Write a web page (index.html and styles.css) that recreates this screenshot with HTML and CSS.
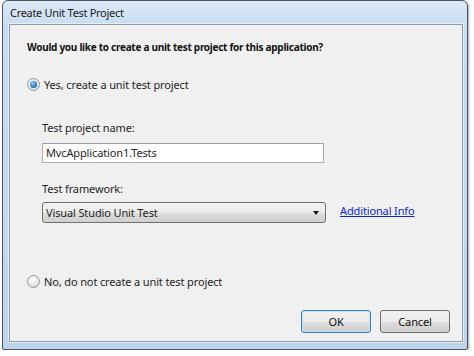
FILE: index.html
```html
<!DOCTYPE html>
<html>
<head>
<meta charset="utf-8">
<link rel="stylesheet" href="styles.css">
</head>
<body>
<div class="window">
  <div class="titlebar">Create Unit Test Project</div>
  <div class="client">
    <div class="question">Would you like to create a unit test project for this application?</div>
    <div class="radio-row yes-row">
      <span class="radio checked"></span>
      <span>Yes, create a unit test project</span>
    </div>
    <div class="options">
      <div class="label">Test project name:</div>
      <div class="textbox">MvcApplication1.Tests</div>
      <div class="label fw-label">Test framework:</div>
      <div class="fw-row">
        <div class="select">
          <span>Visual Studio Unit Test</span>
          <span class="arrow"></span>
        </div>
        <a class="link" href="#">Additional Info</a>
      </div>
    </div>
    <div class="radio-row no-row">
      <span class="radio"></span>
      <span>No, do not create a unit test project</span>
    </div>
    <div class="buttons">
      <div class="btn default">OK</div>
      <div class="btn">Cancel</div>
    </div>
  </div>
</div>
</body>
</html>
```

FILE: styles.css
```css
html, body {
  margin: 0;
  padding: 0;
  background: #ffffff;
}
body {
  font-family: "Noto Sans", "Open Sans", sans-serif;
  font-size: 11px;
  letter-spacing: -0.13px;
  color: #1e1e1e;
}
.window {
  margin-left: 2px;
  width: 464px;
  height: 348px;
  border: 1px solid #4a5460;
  border-radius: 6px 6px 2px 2px;
  background: linear-gradient(to bottom, #dbe8f7 0px, #cadcf1 24px, #bfd4ec 100%);
  display: flex;
  flex-direction: column;
  box-shadow: 1px 1px 2px rgba(0,0,0,0.35);
}
.titlebar {
  height: 23px;
  line-height: 23px;
  padding-left: 7px;
  letter-spacing: -0.3px;
  color: #1b1b1b;
}
.client {
  margin: 0 4px 7px 6px;
  flex: 1;
  background: #f0f0f0;
  border: 1px solid #8b9aac;
  box-shadow: 0 0 0 1px #e6eef8;
  display: flex;
  flex-direction: column;
  padding-left: 17px;
}
.question {
  margin-top: 14px;
  font-weight: bold;
  color: #111;
  font-size: 10px;
  letter-spacing: -0.28px;
  height: 16px;
  line-height: 16px;
}
.radio-row {
  display: flex;
  align-items: center;
  gap: 4px;
  height: 16px;
}
.yes-row {
  margin-top: 21px;
}
.radio {
  width: 11px;
  height: 11px;
  border-radius: 50%;
  border: 1px solid #8f9aa6;
  background: radial-gradient(circle at 40% 35%, #ffffff 0%, #e4e4e4 60%, #cfcfcf 100%);
  position: relative;
  flex: none;
}
.radio.checked::after {
  content: "";
  position: absolute;
  left: 2px;
  top: 2px;
  width: 7px;
  height: 7px;
  border-radius: 50%;
  background: radial-gradient(circle at 40% 35%, #9fd3f7 0%, #2a7ec6 55%, #1a4f86 100%);
}
.options {
  padding-left: 15px;
  margin-top: 28px;
  display: flex;
  flex-direction: column;
}
.label {
  height: 16px;
  line-height: 16px;
}
.textbox {
  margin-top: 7px;
  width: 277px;
  height: 18px;
  line-height: 18px;
  border: 1px solid #abadb3;
  border-top-color: #9a9ea6;
  background: #ffffff;
  padding-left: 3px;
}
.fw-label {
  margin-top: 18px;
}
.fw-row {
  margin-top: 5px;
  display: flex;
  align-items: center;
}
.select {
  width: 273px;
  height: 19px;
  border: 1px solid #707070;
  border-radius: 3px;
  background: linear-gradient(to bottom, #f4f4f4 0%, #ebebeb 50%, #dddddd 51%, #d0d0d0 100%);
  display: flex;
  align-items: center;
  justify-content: space-between;
  padding: 0 6px 0 3px;
}
.arrow {
  width: 0;
  height: 0;
  border-left: 3px solid transparent;
  border-right: 3px solid transparent;
  border-top: 4px solid #111;
}
.link {
  margin-left: 14px;
  margin-top: -4px;
  color: #0a24d8;
  text-decoration: underline;
}
.no-row {
  margin-top: 50px;
}
.buttons {
  margin-top: 21px;
  display: flex;
  justify-content: flex-end;
  gap: 9px;
  padding-right: 12px;
}
.btn {
  width: 68px;
  height: 21px;
  line-height: 21px;
  text-align: center;
  border: 1px solid #707070;
  border-radius: 3px;
  background: linear-gradient(to bottom, #f2f2f2 0%, #ebebeb 50%, #dddddd 51%, #cfcfcf 100%);
  color: #111;
}
.btn.default {
  border-color: #3c7fb1;
  box-shadow: inset 0 0 0 1px #bde6f7;
}
```
